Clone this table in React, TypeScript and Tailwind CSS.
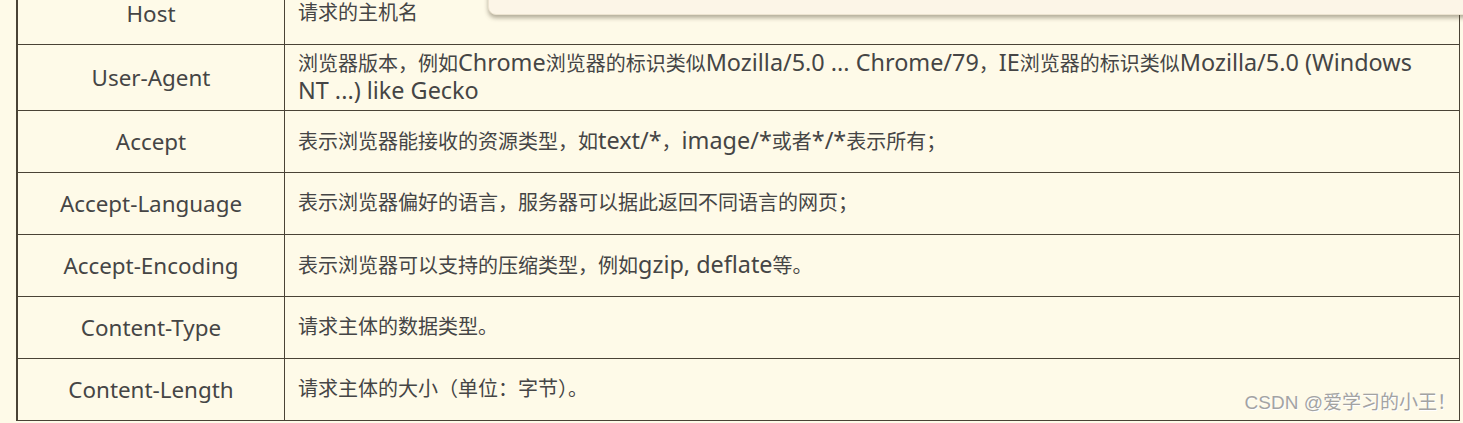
import React from "react";

// CJK runs render at 20px, Latin runs a bit larger to match the reference's mixed font
function Mixed({ text }: { text: string }) {
  const parts = text.split(/([\u3000-\u303f\u4e00-\u9fff\uff00-\uffef]+)/);
  return (
    <>
      {parts.map((p, i) =>
        p === "" ? null : /[\u3000-\u303f\u4e00-\u9fff\uff00-\uffef]/.test(p) ? (
          <span key={i} className="text-[20px]">{p}</span>
        ) : (
          <span key={i} className="text-[23.4px]">{p}</span>
        )
      )}
    </>
  );
}

const rows: { name: string; desc: string[]; tall?: boolean }[] = [
  { name: "Host", desc: ["请求的主机名"] },
  {
    name: "User-Agent",
    desc: [
      "浏览器版本，例如Chrome浏览器的标识类似Mozilla/5.0 ... Chrome/79，IE浏览器的标识类似Mozilla/5.0 (Windows",
      "NT ...) like Gecko",
    ],
    tall: true,
  },
  { name: "Accept", desc: ["表示浏览器能接收的资源类型，如text/*，image/*或者*/*表示所有；"] },
  { name: "Accept-Language", desc: ["表示浏览器偏好的语言，服务器可以据此返回不同语言的网页；"] },
  { name: "Accept-Encoding", desc: ["表示浏览器可以支持的压缩类型，例如gzip, deflate等。"] },
  { name: "Content-Type", desc: ["请求主体的数据类型。"] },
  { name: "Content-Length", desc: ["请求主体的大小（单位：字节）。"] },
];

export default function App() {
  return (
    <div
      className="relative h-[423px] w-[1463px] overflow-hidden bg-[#fefae8] text-[#454545]"
      style={{ fontFamily: '"Noto Sans", "Noto Sans CJK SC", sans-serif' }}
    >
      <div className="ml-[16px] mt-[-17px] w-[1444px] border-l-2 border-r border-[#4a4336]">
        {rows.map((r) => (
          <div
            key={r.name}
            className={`flex border-b border-[#4a4336] ${r.tall ? "h-[66px]" : "h-[62px]"}`}
          >
            <div className="flex w-[267px] shrink-0 items-center justify-center whitespace-nowrap border-r border-[#4a4336] text-[22.4px] leading-[25px]">
              {r.name}
            </div>
            <div className="flex flex-1 items-center pl-[13px] leading-[25px]">
              <div>
                {r.desc.map((line) => (
                  <div key={line} className="whitespace-nowrap">
                    <Mixed text={line} />
                  </div>
                ))}
              </div>
            </div>
          </div>
        ))}
      </div>

      {/* popup over the top */}
      <div className="absolute left-[488px] top-[-30px] h-[45px] w-[1000px] rounded-[8px] border border-[#ece3d0] bg-[#fcf5e7] shadow-[0_3px_4px_rgba(90,80,60,0.45)]" />

      {/* watermark */}
      <div
        className="absolute bottom-[6px] right-[7px] text-[19px] text-[#a3a3a3] [text-shadow:1px_1px_0_#ffffff]"
        style={{ fontFamily: '"Liberation Sans", "Noto Sans CJK SC", sans-serif' }}
      >
        CSDN @爱学习的小王！
      </div>
    </div>
  );
}
